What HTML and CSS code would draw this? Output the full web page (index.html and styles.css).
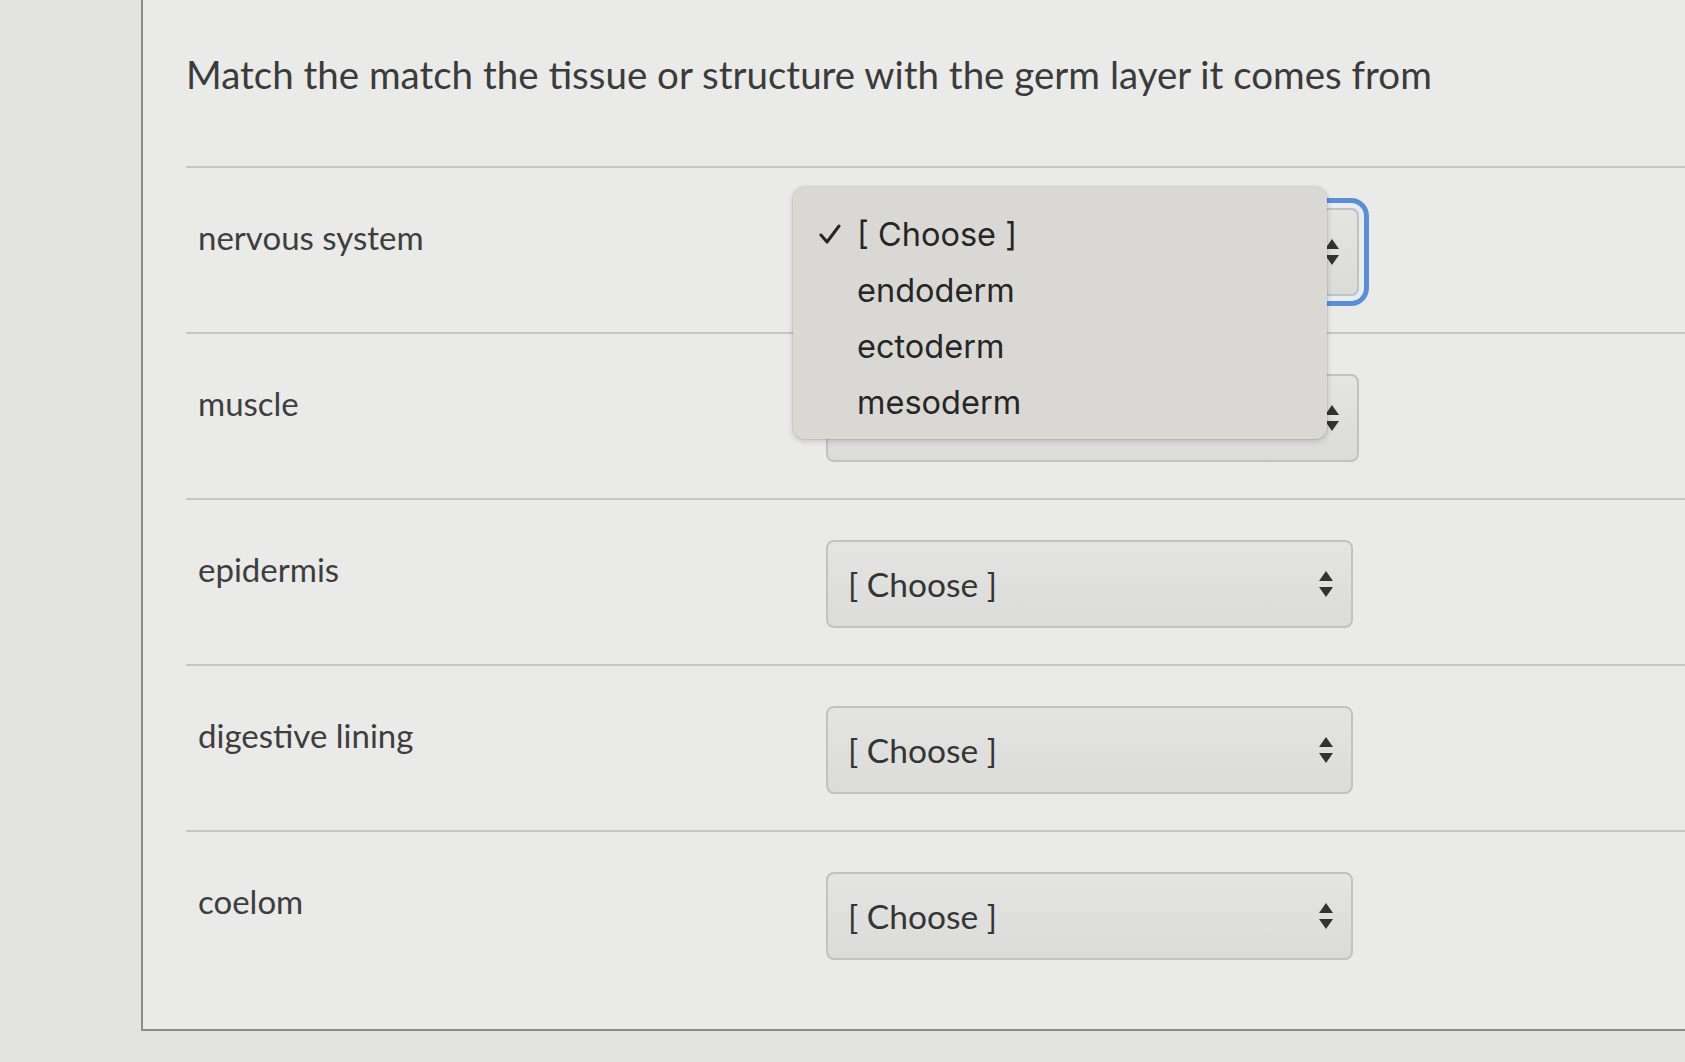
FILE: index.html
```html
<!DOCTYPE html>
<html lang="en">
<head>
<meta charset="utf-8">
<title>Matching question</title>
<link rel="stylesheet" href="styles.css">
</head>
<body>
<div class="page">
  <div class="gutter"></div>
  <main class="panel">
    <h1 class="title">Match the match the tissue or structure with the germ layer it comes from</h1>
    <div class="rows">
      <div class="row">
        <div class="label">nervous system</div>
        <div class="select-wrap wide">
          <div class="select focused">
            <span class="value"></span>
            <svg class="arrows" viewBox="0 0 14 30" width="14" height="30"><path d="M0 12 L7 2 L14 12 Z M0 18 L7 28 L14 18 Z"/></svg>
          </div>
          <div class="menu">
            <div class="item"><svg class="check" viewBox="0 0 22 22" width="22" height="22"><path d="M2 12 L8 19 L20 3"/></svg>[ Choose ]</div>
            <div class="item">endoderm</div>
            <div class="item">ectoderm</div>
            <div class="item">mesoderm</div>
          </div>
        </div>
      </div>
      <div class="row">
        <div class="label">muscle</div>
        <div class="select-wrap wide">
          <div class="select">
            <span class="value">[ Choose ]</span>
            <svg class="arrows" viewBox="0 0 14 30" width="14" height="30"><path d="M0 12 L7 2 L14 12 Z M0 18 L7 28 L14 18 Z"/></svg>
          </div>
        </div>
      </div>
      <div class="row">
        <div class="label">epidermis</div>
        <div class="select-wrap">
          <div class="select">
            <span class="value">[ Choose ]</span>
            <svg class="arrows" viewBox="0 0 14 30" width="14" height="30"><path d="M0 12 L7 2 L14 12 Z M0 18 L7 28 L14 18 Z"/></svg>
          </div>
        </div>
      </div>
      <div class="row">
        <div class="label">digestive lining</div>
        <div class="select-wrap">
          <div class="select">
            <span class="value">[ Choose ]</span>
            <svg class="arrows" viewBox="0 0 14 30" width="14" height="30"><path d="M0 12 L7 2 L14 12 Z M0 18 L7 28 L14 18 Z"/></svg>
          </div>
        </div>
      </div>
      <div class="row last">
        <div class="label">coelom</div>
        <div class="select-wrap">
          <div class="select">
            <span class="value">[ Choose ]</span>
            <svg class="arrows" viewBox="0 0 14 30" width="14" height="30"><path d="M0 12 L7 2 L14 12 Z M0 18 L7 28 L14 18 Z"/></svg>
          </div>
        </div>
      </div>
    </div>
  </main>
</div>
</body>
</html>
```

FILE: styles.css
```css
html, body {
  margin: 0;
  padding: 0;
}
body {
  background: #e3e3e1;
  font-family: "Lato", "Noto Sans", sans-serif;
  color: #3a3a3a;
  width: 1685px;
  height: 1062px;
  overflow: hidden;
}
.page {
  display: flex;
  height: 1062px;
}
.gutter {
  width: 141px;
  flex: none;
}
.panel {
  flex: 1;
  height: 1031px;
  background: #eaeae8;
  border-left: 2px solid #8c8c8a;
  border-bottom: 2px solid #8c8c8a;
  padding-left: 43px;
  box-sizing: border-box;
}
.title {
  margin: 0;
  padding-top: 47px;
  height: 166px;
  box-sizing: border-box;
  font-weight: 400;
  font-size: 38.5px;
  line-height: 54px;
  color: #3b3b3b;
  white-space: nowrap;
}
.rows {
  display: flex;
  flex-direction: column;
}
.row {
  display: flex;
  height: 166px;
  border-top: 2px solid #c6c6c4;
  box-sizing: border-box;
}
.label {
  width: 640px;
  flex: none;
  padding-left: 12px;
  padding-top: 48px;
  box-sizing: border-box;
  font-size: 33px;
  line-height: 42px;
  color: #3e3e3e;
}
.select-wrap {
  position: relative;
  margin-top: 40px;
  width: 527px;
  height: 88px;
}
.select-wrap.wide {
  width: 533px;
}
.select {
  height: 88px;
  box-sizing: border-box;
  border: 2px solid #c2c2c0;
  border-radius: 8px;
  background: linear-gradient(#e4e4e2, #dbdbd9);
  display: flex;
  align-items: center;
  justify-content: space-between;
  padding: 0 18px 0 20px;
}
.select.focused {
  box-shadow: 0 0 0 5px #e8ebef, 0 0 0 10px #5b8fd4;
}
.value {
  font-size: 33.5px;
  color: #353535;
}
.arrows {
  fill: #333333;
  flex: none;
}
.menu {
  position: absolute;
  z-index: 10;
  left: -33px;
  top: -21px;
  width: 534px;
  height: 252px;
  box-sizing: border-box;
  padding: 19px 0 9px 0;
  background: #dad8d5;
  border-radius: 12px;
  box-shadow: 0 2px 6px rgba(0,0,0,0.18), 0 0 0 1px rgba(0,0,0,0.06);
  font-family: "Inter", "Liberation Sans", sans-serif;
}
.item {
  position: relative;
  height: 56px;
  display: flex;
  align-items: center;
  padding-left: 64px;
  font-size: 32.5px;
  color: #262626;
}
.check {
  position: absolute;
  left: 26px;
  top: 17px;
  fill: none;
  stroke: #262626;
  stroke-width: 3;
  stroke-linecap: round;
  stroke-linejoin: round;
}
```
